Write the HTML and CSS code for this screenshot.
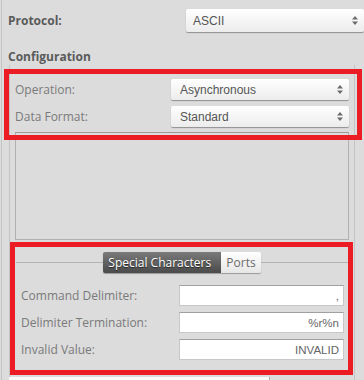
FILE: index.html
```html
<!DOCTYPE html>
<html>
<head>
<meta charset="utf-8">
<link rel="stylesheet" href="styles.css">
</head>
<body>
<div class="page">
  <div class="row protocol">
    <span class="label strong">Protocol:</span>
    <div class="select wide"><span>ASCII</span><svg class="arrows" width="6" height="9" viewBox="0 0 6 9"><path d="M3 0 L6 3.5 H0 Z M3 9 L6 5.5 H0 Z" fill="#6a6a6a"/></svg></div>
  </div>
  <div class="heading">Configuration</div>
  <div class="panel">
    <div class="row op">
      <span class="label">Operation:</span>
      <div class="select"><span>Asynchronous</span><svg class="arrows" width="6" height="9" viewBox="0 0 6 9"><path d="M3 0 L6 3.5 H0 Z M3 9 L6 5.5 H0 Z" fill="#6a6a6a"/></svg></div>
    </div>
    <div class="row op">
      <span class="label">Data Format:</span>
      <div class="select"><span>Standard</span><svg class="arrows" width="6" height="9" viewBox="0 0 6 9"><path d="M3 0 L6 3.5 H0 Z M3 9 L6 5.5 H0 Z" fill="#6a6a6a"/></svg></div>
    </div>
    <div class="blank"></div>
    <div class="tabbar">
      <div class="tab active">Special Characters</div>
      <div class="tab">Ports</div>
    </div>
    <div class="fields">
      <div class="field"><span class="label">Command Delimiter:</span><div class="input">,</div></div>
      <div class="field"><span class="label">Delimiter Termination:</span><div class="input">%r%n</div></div>
      <div class="field"><span class="label">Invalid Value:</span><div class="input">INVALID</div></div>
    </div>
    <div class="footer"></div>
  </div>
</div>
<div class="mark mark1"></div>
<div class="mark mark2"></div>
</body>
</html>
```
FILE: styles.css
```css
html, body {
  margin: 0;
  padding: 0;
  background: #dcdcdc;
  width: 364px;
  height: 380px;
  overflow: hidden;
}
.page {
  margin-left: 1px;
  border-left: 1px solid #c4c4c4;
  height: 380px;
  padding-left: 6px;
  font-family: "Open Sans", sans-serif;
  font-size: 12px;
  color: #7a7a7a;
}
.row {
  display: flex;
  align-items: center;
  height: 23px;
}
.protocol {
  padding-top: 9px;
}
.label {
  flex: 1;
  line-height: 16px;
}
.strong {
  font-weight: 700;
  color: #5a5a5a;
}
.select {
  width: 178px;
  height: 21px;
  box-sizing: border-box;
  display: flex;
  align-items: center;
  justify-content: space-between;
  padding: 0 6px 0 9px;
  background: linear-gradient(#ffffff, #ececec);
  border-radius: 2px;
  box-shadow: 0 1px 1px rgba(0, 0, 0, 0.35);
  font-family: "Liberation Sans", Arial, sans-serif;
  font-size: 12px;
  color: #555;
}
.wide {
  height: 23px;
  padding-left: 7px;
}
.heading {
  margin-top: 16px;
  font-weight: 700;
  color: #5a5a5a;
  line-height: 17px;
}
.panel {
  margin-left: 1px;
  width: 346px;
  box-sizing: border-box;
  border-left: 1px solid #c4c4c4;
  border-right: 1px solid #c4c4c4;
  padding: 14px 5px 0 5px;
  height: 315px;
}
.op {
  height: 21px;
}
.op + .op {
  margin-top: 6px;
}
.blank {
  margin-top: 5px;
  height: 108px;
  box-sizing: border-box;
  border: 1px solid #b0b0b0;
  border-top-color: #999;
}
.tabbar {
  margin: 12px 1px 0 1px;
  display: flex;
  align-items: center;
  height: 21px;
}
.tabbar::before,
.tabbar::after {
  content: "";
  flex: 1;
  height: 1px;
  background: #b4b4b4;
}
.tab {
  height: 21px;
  line-height: 21px;
  padding: 0 5px;
  font-size: 12px;
  color: #6a6a6a;
  background: linear-gradient(#ffffff, #e6e6e6);
  box-shadow: 0 1px 1px rgba(0, 0, 0, 0.3);
  border-radius: 0 2px 2px 0;
}
.tab.active {
  color: #fff;
  background: linear-gradient(#7a7a7a, #4a4a4a);
  text-shadow: 0 1px 1px rgba(0, 0, 0, 0.6);
  border-radius: 2px 0 0 2px;
  width: 108px;
}
.fields {
  margin-top: 12px;
  padding: 0 5px 0 6px;
}
.field {
  display: flex;
  align-items: center;
  height: 21px;
}
.field + .field {
  margin-top: 6px;
}
.input {
  width: 165px;
  height: 21px;
  box-sizing: border-box;
  background: #fff;
  border: 1px solid #c8c8c8;
  border-top-color: #a0a0a0;
  text-align: right;
  padding: 0 4px;
  line-height: 20px;
  font-family: "Liberation Sans", Arial, sans-serif;
  font-size: 11.5px;
  color: #666;
}
.footer {
  margin: 17px 0 0 -6px;
  width: 260px;
  height: 4px;
  background: #fafafa;
  border-right: 1px solid #aaa;
}
.mark {
  position: absolute;
  border: 5px solid #ec1c24;
  box-sizing: border-box;
}
.mark1 {
  left: 4px;
  top: 69px;
  width: 358px;
  height: 71px;
}
.mark2 {
  left: 10px;
  top: 242px;
  width: 343px;
  height: 133px;
}
```
